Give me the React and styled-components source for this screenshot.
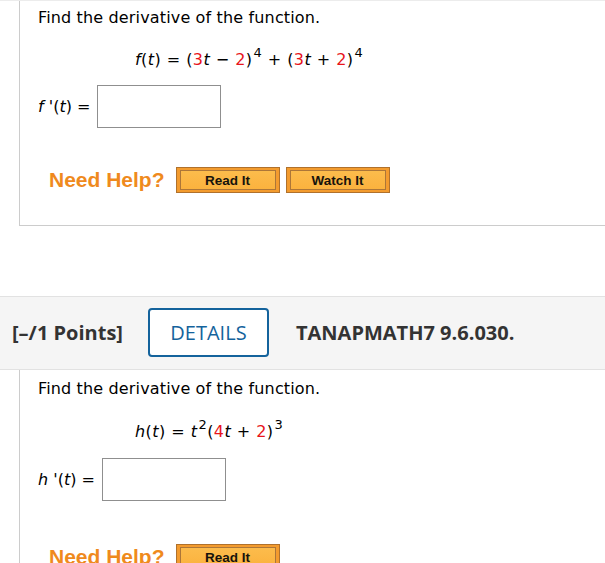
import React from 'react';
import styled, { createGlobalStyle } from 'styled-components';

const GlobalStyle = createGlobalStyle`
  html, body {
    margin: 0;
    padding: 0;
    background: #fff;
  }
  body {
    font-family: "DejaVu Sans", sans-serif;
    color: #000;
  }
`

const Page = styled.div`
  width: 605px;
  height: 563px;
  overflow: hidden;
  border-top: 1px solid #ececec;
  box-sizing: border-box;
`

//one question body, left rule + optional bottom rule
const Question = styled.div`
  margin-left: 19px;
  border-left: 1px solid #cccccc;
  border-bottom: ${p => (p.closed ? '1px solid #cccccc' : 'none')};
  padding: ${p => p.top || 0}px 0 ${p => (p.closed ? '32px' : '0')} 18px;
`

const Prompt = styled.div`
  height: 34px;
  line-height: 34px;
  font-size: 16px;
  letter-spacing: 0.15px;
`

const Formula = styled.div`
  height: ${p => p.h}px;
  line-height: ${p => p.h}px;
  padding-left: 97px;
  font-size: 16px;
  letter-spacing: 0.45px;
  white-space: pre;
`

const Var = styled.i`
  font-style: italic;
`

const Red = styled.span`
  color: #e8141b;
`

const Sup = styled.sup`
  font-size: 13px;
  vertical-align: 8px;
  line-height: 0;
  margin-left: 1px;
`

const AnswerRow = styled.div`
  display: flex;
  align-items: center;
  gap: 7px;
  font-size: 16px;
  white-space: pre;
`

const AnswerBox = styled.div`
  width: 122px;
  height: 41px;
  border: 1px solid #8f8f8f;
  background: #fff;
`

const HelpRow = styled.div`
  display: flex;
  align-items: center;
  margin-top: ${p => p.gap}px;
  padding-left: 11px;
  height: 26px;
`

const NeedHelp = styled.span`
  font-family: "Liberation Sans", Arial, sans-serif;
  font-weight: bold;
  font-size: 21px;
  color: #ef8a1d;
  margin-right: 11px;
`

const HelpButton = styled.div`
  width: 104px;
  height: 26px;
  box-sizing: border-box;
  border: 1px solid #b0712c;
  background: #f39b2e;
  padding: 2px 3px;
  margin-right: 6px;
  display: flex;
`

const HelpButtonFace = styled.div`
  flex: 1;
  border: 1px solid #ad7638;
  background: linear-gradient(#fcbc4c, #fbb23e);
  display: flex;
  align-items: center;
  justify-content: center;
  font-family: "Liberation Sans", Arial, sans-serif;
  font-weight: bold;
  font-size: 13.5px;
  color: #17130c;
`

const Gap = styled.div`
  height: 70px;
`

const Header = styled.div`
  display: flex;
  align-items: center;
  background: #f5f5f5;
  border-top: 1px solid #e2e2e2;
  border-bottom: 1px solid #e2e2e2;
  padding: 11px 0 12px 12px;
  font-family: "Open Sans", sans-serif;
  color: #333;
`

const Points = styled.span`
  font-weight: bold;
  font-size: 20px;
  margin-right: 25px;
`

const Details = styled.div`
  width: 121px;
  height: 49px;
  box-sizing: border-box;
  border: 2px solid #14639c;
  border-radius: 4px;
  display: flex;
  align-items: center;
  justify-content: center;
  color: #14639c;
  font-size: 20px;
  margin-right: 27px;
  background: #fff;
`

const Code = styled.span`
  font-weight: bold;
  font-size: 20px;
`

const Help = ({ watch, gap }) => (
  <HelpRow gap={gap}>
    <NeedHelp>Need Help?</NeedHelp>
    <HelpButton><HelpButtonFace>Read It</HelpButtonFace></HelpButton>
    {watch && <HelpButton><HelpButtonFace>Watch It</HelpButtonFace></HelpButton>}
  </HelpRow>
)

export default function App() {
  return (
    <Page>
      <GlobalStyle />
      <Question closed>
        <Prompt>Find the derivative of the function.</Prompt>
        <Formula h={50}>
          <Var>f</Var>(<Var>t</Var>) = (<Red>3</Red><Var>t</Var> − <Red>2</Red>)<Sup>4</Sup> + (<Red>3</Red><Var>t</Var> + <Red>2</Red>)<Sup>4</Sup>
        </Formula>
        <AnswerRow>
          <span><Var>f</Var> '(<Var>t</Var>) =</span>
          <AnswerBox />
        </AnswerRow>
        <Help watch gap={39} />
      </Question>
      <Gap />
      <Header>
        <Points>[–/1 Points]</Points>
        <Details>DETAILS</Details>
        <Code>TANAPMATH7 9.6.030.</Code>
      </Header>
      <Question top={2}>
        <Prompt>Find the derivative of the function.</Prompt>
        <Formula h={52}>
          <Var>h</Var>(<Var>t</Var>) = <Var>t</Var><Sup>2</Sup>(<Red>4</Red><Var>t</Var> + <Red>2</Red>)<Sup>3</Sup>
        </Formula>
        <AnswerRow>
          <span><Var>h</Var> '(<Var>t</Var>) =</span>
          <AnswerBox />
        </AnswerRow>
        <Help gap={43} />
      </Question>
    </Page>
  );
}
